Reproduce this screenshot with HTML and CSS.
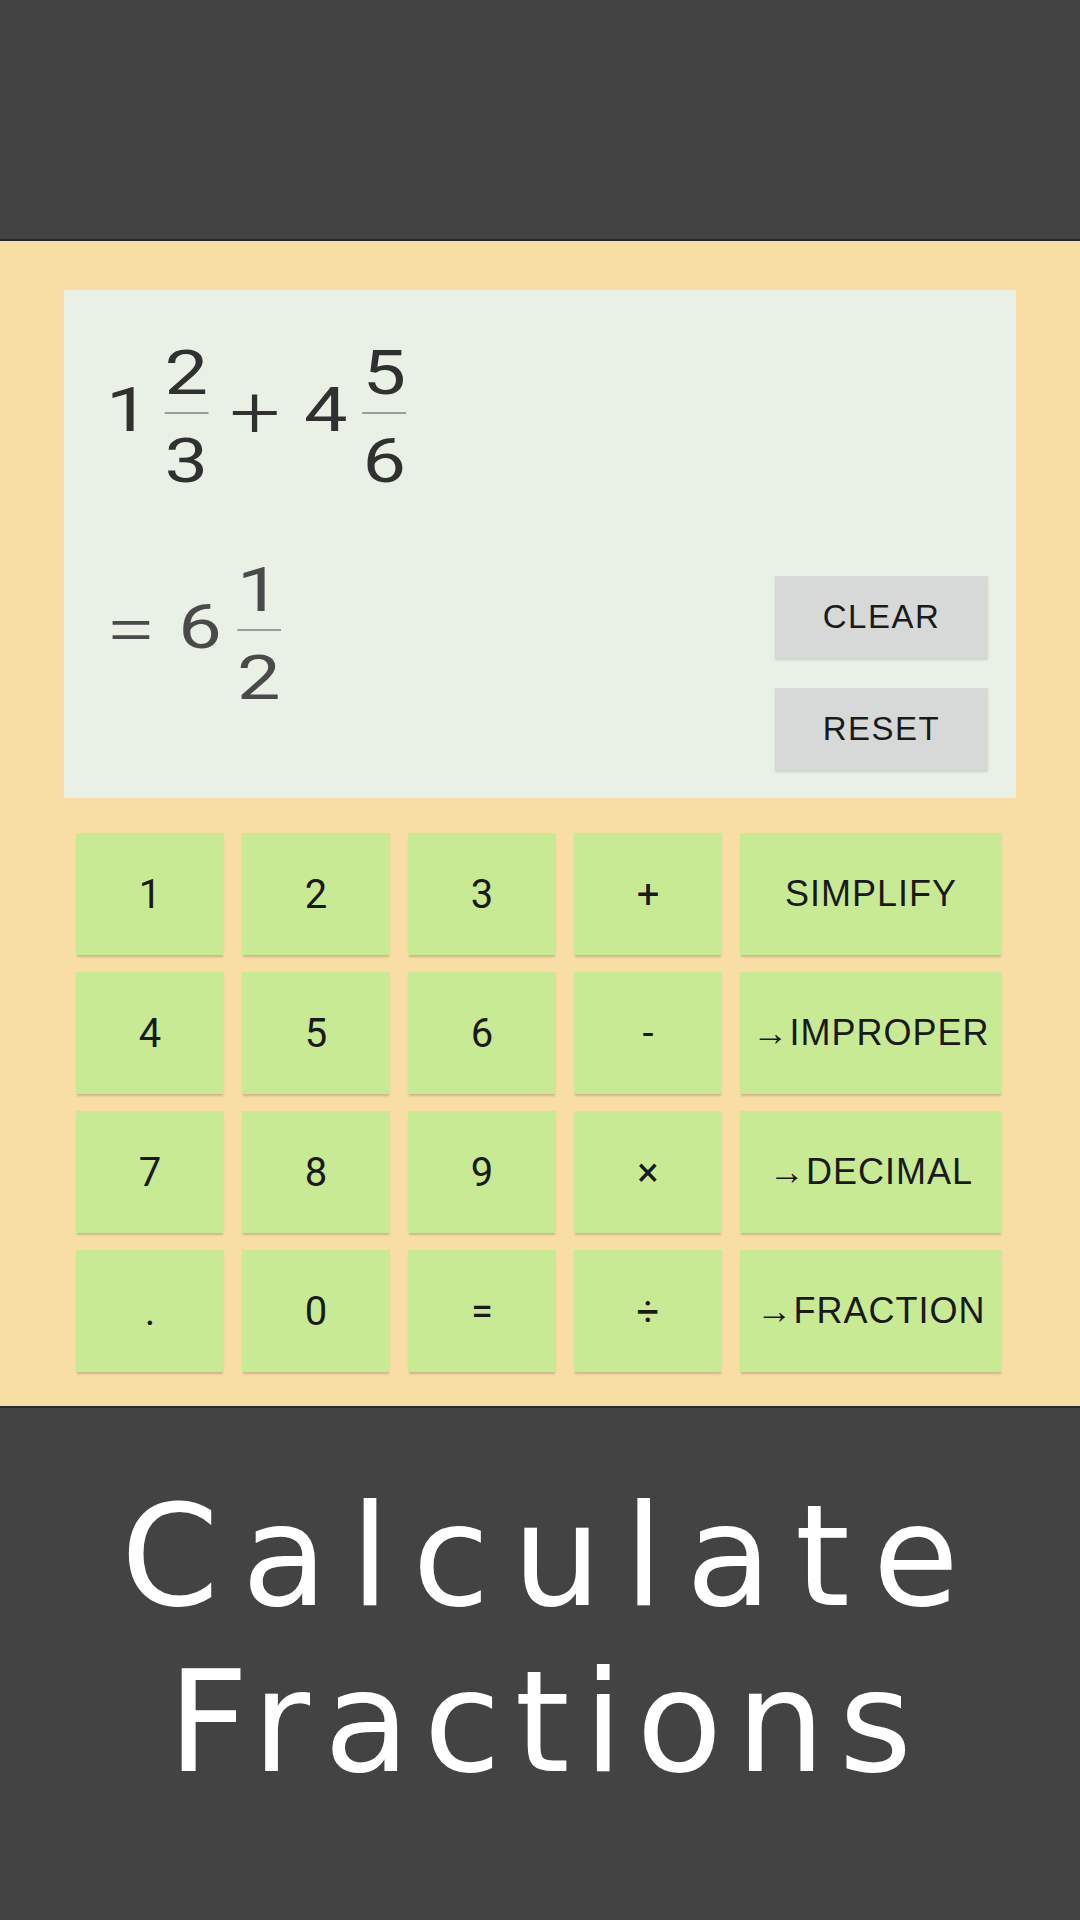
FILE: index.html
```html
<!DOCTYPE html>
<html lang="en">
<head>
    <meta charset="UTF-8">
    <meta name="viewport" content="width=device-width, initial-scale=1.0">
    <title>Fraction Calculator</title>
    <link rel="stylesheet" href="styles.css">
</head>
<body>

<div class="top-bar"></div>

<div class="app">
    <div class="display">
        <div class="lines">
            <div class="line expr">
                <span class="whole">1</span>
                <span class="frac"><span class="num">2</span><span class="bar"></span><span class="den">3</span></span>
                <span class="op">+</span>
                <span class="whole">4</span>
                <span class="frac"><span class="num">5</span><span class="bar"></span><span class="den">6</span></span>
            </div>
            <div class="line result">
                <span class="op op-eq">=</span>
                <span class="whole">6</span>
                <span class="frac"><span class="num">1</span><span class="bar"></span><span class="den">2</span></span>
            </div>
        </div>
        <div class="actions">
            <button class="action">CLEAR</button>
            <button class="action">RESET</button>
        </div>
    </div>

    <div class="keypad">
        <button class="key">1</button>
        <button class="key">2</button>
        <button class="key">3</button>
        <button class="key">+</button>
        <button class="key key-word">SIMPLIFY</button>

        <button class="key">4</button>
        <button class="key">5</button>
        <button class="key">6</button>
        <button class="key">-</button>
        <button class="key key-word">→IMPROPER</button>

        <button class="key">7</button>
        <button class="key">8</button>
        <button class="key">9</button>
        <button class="key">×</button>
        <button class="key key-word">→DECIMAL</button>

        <button class="key">.</button>
        <button class="key">0</button>
        <button class="key">=</button>
        <button class="key">÷</button>
        <button class="key key-word">→FRACTION</button>
    </div>
</div>

<div class="caption">
    <span class="caption-line first">Calculate</span>
    <span class="caption-line second">Fractions</span>
</div>

</body>
</html>
```

FILE: styles.css
```css
body {
    margin: 0;
    background: #434343;
    font-family: Roboto, "Liberation Sans", sans-serif;
}

.top-bar {
    height: 241px;
    box-sizing: border-box;
    background: #434343;
    border-bottom: 2px solid #262626;
}

.app {
    height: 1165px;
    box-sizing: border-box;
    padding: 49px 64px 0 64px;
    background: #f8dea5;
}

.display {
    height: 508px;
    box-sizing: border-box;
    display: flex;
    justify-content: space-between;
    padding: 52px 28px 28px 42px;
    background: #e9f1e6;
}

.lines {
    display: flex;
    flex-direction: column;
    gap: 67px;
}

/* digits in the app are wider than Roboto's */
.line {
    display: flex;
    align-items: center;
    font-size: 62px;
    line-height: 1;
    color: #303030;
    transform: scaleX(1.25);
    transform-origin: left center;
}

.result {
    color: #4a4a4a;
}

.frac {
    display: flex;
    flex-direction: column;
    text-align: center;
}

.bar {
    height: 2px;
    margin: 8px 0 16px;
    background: #9c9c9c;
}

.whole {
    margin-right: 12px;
    margin-bottom: 14px;
}

.op {
    font-size: 72px;
    font-weight: 300;
    margin: 0 19px 8px 17px;
}

.op-eq {
    margin-left: 0;
    margin-right: 18px;
}

.actions {
    display: flex;
    flex-direction: column;
    justify-content: flex-end;
    gap: 30px;
}

.action {
    width: 213px;
    height: 82px;
    border: none;
    background: #d7d9d9;
    font-family: "Liberation Sans", Arial, sans-serif;
    font-size: 33px;
    letter-spacing: 1.5px;
    color: #1a1a1a;
    box-shadow: 0 2px 2px rgba(0, 0, 0, 0.12);
}

.keypad {
    display: grid;
    grid-template-columns: repeat(4, 1fr) 262px;
    grid-auto-rows: 122px;
    column-gap: 18px;
    row-gap: 17px;
    margin-top: 35px;
    padding: 0 14px 0 12px;
}

.key {
    border: none;
    padding: 0;
    background: #c9ea95;
    font-family: Roboto, sans-serif;
    font-size: 40px;
    color: #1a1a1a;
    box-shadow: 0 3px 2px -1px rgba(0, 0, 0, 0.18);
}

.key-word {
    font-family: "Liberation Sans", Arial, sans-serif;
    font-size: 36px;
    letter-spacing: 1px;
}

.caption {
    height: 514px;
    box-sizing: border-box;
    padding-top: 66px;
    border-top: 2px solid #2a2a2a;
    text-align: center;
    color: #ffffff;
    font-family: "DejaVu Sans", sans-serif;
    font-size: 140px;
    line-height: 166px;
}

.caption-line {
    display: block;
}

.first {
    letter-spacing: 23px;
    padding-left: 23px;
}

.second {
    letter-spacing: 14px;
    padding-left: 14px;
}
```
